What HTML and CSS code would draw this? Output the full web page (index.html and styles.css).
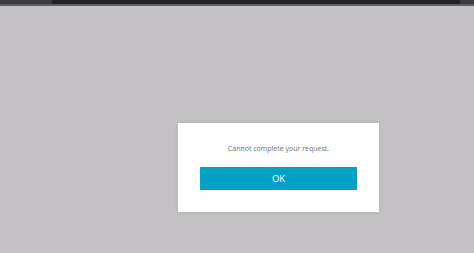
FILE: index.html
```html
<!DOCTYPE html>
<html>
<head>
<meta charset="utf-8">
<link rel="stylesheet" href="styles.css">
</head>
<body>
<div class="topbar"><div class="topbar-inner"></div></div>
<div class="stage">
  <div class="dialog">
    <p class="message">Cannot complete your request.</p>
    <button class="ok">OK</button>
  </div>
</div>
</body>
</html>
```
FILE: styles.css
```css
html, body {
  margin: 0;
  padding: 0;
  height: 100%;
}
body {
  background: #c3c1c4;
  font-family: "Open Sans", "DejaVu Sans", sans-serif;
  display: flex;
  flex-direction: column;
  overflow: hidden;
}
.topbar {
  height: 4px;
  background: #3a3b40;
  border-bottom: 2px solid #5f5f63;
  padding: 0 14px 0 52px;
  display: flex;
}
.topbar-inner {
  flex: 1;
  background: #202127;
}
.stage {
  flex: 1;
  padding: 117px 0 0 178px;
}
.dialog {
  width: 201px;
  box-sizing: border-box;
  background: #ffffff;
  padding: 20px 22px 22px;
  box-shadow: 0 0 4px rgba(0, 0, 0, 0.12);
  display: flex;
  flex-direction: column;
}
.message {
  margin: 0 0 12px;
  font-family: "Open Sans", "DejaVu Sans", sans-serif;
  font-size: 7px;
  line-height: 12px;
  color: #6f6f6f;
  text-align: center;
}
.ok {
  height: 23px;
  border: 0;
  padding: 0;
  background: #05a0c6;
  color: #ffffff;
  font-family: "Open Sans", "DejaVu Sans", sans-serif;
  font-size: 9.5px;
}
```
